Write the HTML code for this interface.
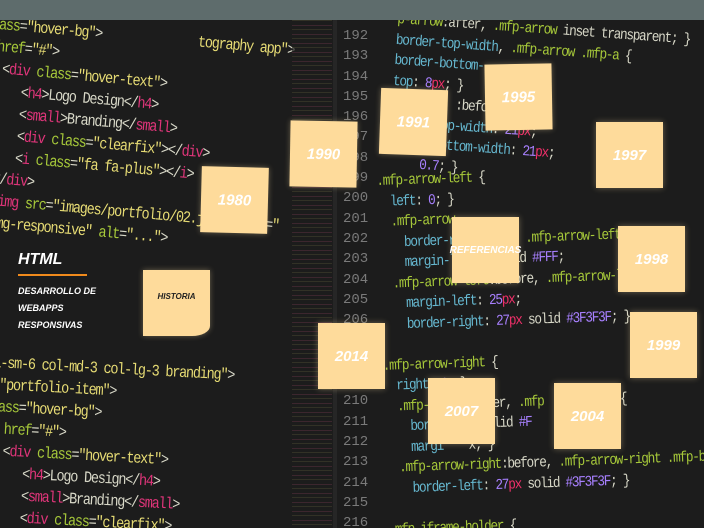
<!DOCTYPE html>
<html style="width:704px;height:528px;overflow:hidden"><head><meta charset="utf-8"><style>
*{margin:0;padding:0}
body{width:704px;height:528px;overflow:hidden;background:#1c1c1c;position:relative;font-family:"Liberation Mono",monospace}
.top{position:absolute;left:0;top:0;width:704px;height:20px;background:#5e6c6c;z-index:5}
.code{position:absolute;white-space:pre;font-size:16px;line-height:22px;color:#d8d8c8;transform-origin:0 0;letter-spacing:-1.5px}
.t{color:#e0357a}.a{color:#a6c83a}.s{color:#e6db74}.k{color:#66b8d0}.n{color:#a880ff}.p{color:#f0306a}
.ln{position:absolute;left:343px;top:26px;font-size:14px;line-height:20.3px;color:#7a7a7a;white-space:pre}
.mini{position:absolute;left:292px;top:20px;width:40px;height:508px;background:repeating-linear-gradient(180deg,#3b3a2a 0 1px,#1c1c1c 1px 5px,#4a2a35 5px 6px,#1c1c1c 6px 9px);opacity:.7}
.gut{position:absolute;left:333px;top:20px;width:4px;height:508px;background:#262626}
.note{position:absolute;width:67px;height:66px;background:#fedb9b;box-shadow:0 0 6px rgba(255,230,170,.35);color:#fff;font-family:"Liberation Sans",sans-serif;font-weight:bold;font-style:italic;font-size:15px;display:flex;align-items:center;justify-content:center;z-index:3}
.h{position:absolute;color:#fff;font-family:"Liberation Sans",sans-serif;font-weight:bold;font-style:italic;z-index:3}
</style></head><body>
<div class="top"></div>
<div class="code" style="left:0;top:14px;transform:rotate(5deg) scaleX(.85)"><span class="a">ass</span>=<span class="s">"hover-bg"</span>>              <span class="s">tography app"</span>>
<span class="a">href</span>=<span class="s">"#"</span>>
 &lt;<span class="t">div</span> <span class="a">class</span>=<span class="s">"hover-text"</span>>
    &lt;<span class="t">h4</span>>Logo Design&lt;/<span class="t">h4</span>>
    &lt;<span class="t">small</span>>Branding&lt;/<span class="t">small</span>>
    &lt;<span class="t">div</span> <span class="a">class</span>=<span class="s">"clearfix"</span>>&lt;/<span class="t">div</span>>
    &lt;<span class="t">i</span> <span class="a">class</span>=<span class="s">"fa fa-plus"</span>>&lt;/<span class="t">i</span>>
 &lt;/<span class="t">div</span>>
 &lt;<span class="t">img</span> <span class="a">src</span>=<span class="s">"images/portfolio/02.jpg"</span> <span class="a">class</span>=<span class="s">"</span>
 <span class="s">img-responsive"</span> <span class="a">alt</span>=<span class="s">"..."</span>>
<span class="t">a</span>></div>
<div class="code" style="left:-6px;top:352px;transform:rotate(3deg) scaleX(.85)"><span class="s">l-sm-6 col-md-3 col-lg-3 branding"</span>>
=<span class="s">"portfolio-item"</span>>
<span class="a">lass</span>=<span class="s">"hover-bg"</span>>
  <span class="a">href</span>=<span class="s">"#"</span>>
  &lt;<span class="t">div</span> <span class="a">class</span>=<span class="s">"hover-text"</span>>
     &lt;<span class="t">h4</span>>Logo Design&lt;/<span class="t">h4</span>>
     &lt;<span class="t">small</span>>Branding&lt;/<span class="t">small</span>>
     &lt;<span class="t">div</span> <span class="a">class</span>=<span class="s">"clearfix"</span>></div>
<div class="mini"></div><div class="gut"></div>
<div class="ln">192
193
194
195
196
197
198
199
200
201
202
203
204
205
206
207
208
209
210
211
212
213
214
215
216
217</div>
<div class="code" style="left:398px;top:10px;font-size:15px;line-height:20.5px;transform:rotate(4deg) scaleX(.85)"><span class="a">p-arrow</span>:after, <span class="a">.mfp-arrow</span> inset transparent; }
<span class="k">border-top-width</span>, <span class="a">.mfp-arrow .mfp-a</span> {
<span class="k">border-bottom-</span>
<span class="k">top</span>: <span class="n">8</span><span class="p">px</span>; }
<span class="a">.mfp</span>      :before
<span class="k">border-top-width</span>: <span class="n">21</span><span class="p">px</span>;
<span class="k">border-bottom-width</span>: <span class="n">21</span><span class="p">px</span>;
     <span class="n">0.7</span>; }</div>
<div class="code" style="left:376px;top:172px;font-size:15px;line-height:20.5px;transform:rotate(-2deg) scaleX(.85)"><span class="a">.mfp-arrow-left</span> {
  <span class="k">left</span>: <span class="n">0</span>; }
  <span class="a">.mfp-arrow-</span>
    <span class="k">border-ri</span>          <span class="a">.mfp-arrow-left</span>
    <span class="k">margin-le</span>     solid <span class="n">#FFF</span>;
  <span class="a">.mfp-arrow-left</span>:before, <span class="a">.mfp-arrow-left</span>
    <span class="k">margin-left</span>: <span class="n">25</span><span class="p">px</span>;
    <span class="k">border-right</span>: <span class="n">27</span><span class="p">px</span> solid <span class="n">#3F3F3F</span>; }

<span class="a">.mfp-arrow-right</span> {
  <span class="k">right</span>: <span class="n">0</span>; }
  <span class="a">.mfp-arrow</span>   fter, <span class="a">.mfp</span>     <span class="a">.mfp-a</span> {
    <span class="k">borde</span>      solid <span class="n">#F</span>
    <span class="k">margi</span>    x; }
  <span class="a">.mfp-arrow-right</span>:before, <span class="a">.mfp-arrow-right .mfp-b</span> {
    <span class="k">border-left</span>: <span class="n">27</span><span class="p">px</span> solid <span class="n">#3F3F3F</span>; }

<span class="a">.mfp-iframe-holder</span> {
  <span class="k">padding-top</span>: <span class="n">40</span><span class="p">px</span>;</div>
<div class="h" style="left:18px;top:251px;font-size:16px">HTML</div>
<div style="position:absolute;left:18px;top:274px;width:69px;height:2px;background:#f08a1c;z-index:3"></div>
<div class="h" style="left:18px;top:283px;font-size:9px;line-height:17px">DESARROLLO DE<br>WEBAPPS<br>RESPONSIVAS</div>
<div class="note" style="left:201px;top:167px;transform:rotate(1.5deg)">1980</div>
<div class="note" style="left:290px;top:121px;transform:rotate(1deg)">1990</div>
<div class="note" style="left:380px;top:89px;transform:rotate(2deg)">1991</div>
<div class="note" style="left:485px;top:64px;transform:rotate(-1deg)">1995</div>
<div class="note" style="left:596px;top:122px">1997</div>
<div class="note" style="left:452px;top:217px;font-size:10px">REFERENCIAS</div>
<div class="note" style="left:618px;top:226px">1998</div>
<div class="note" style="left:630px;top:312px">1999</div>
<div class="note" style="left:318px;top:323px">2014</div>
<div class="note" style="left:428px;top:378px">2007</div>
<div class="note" style="left:554px;top:383px">2004</div>
<div class="note" style="left:143px;top:270px;color:#222;font-size:8px;align-items:flex-start;padding-top:22px;box-sizing:border-box;border-bottom-right-radius:18px 10px">HISTORIA</div>
</body></html>
